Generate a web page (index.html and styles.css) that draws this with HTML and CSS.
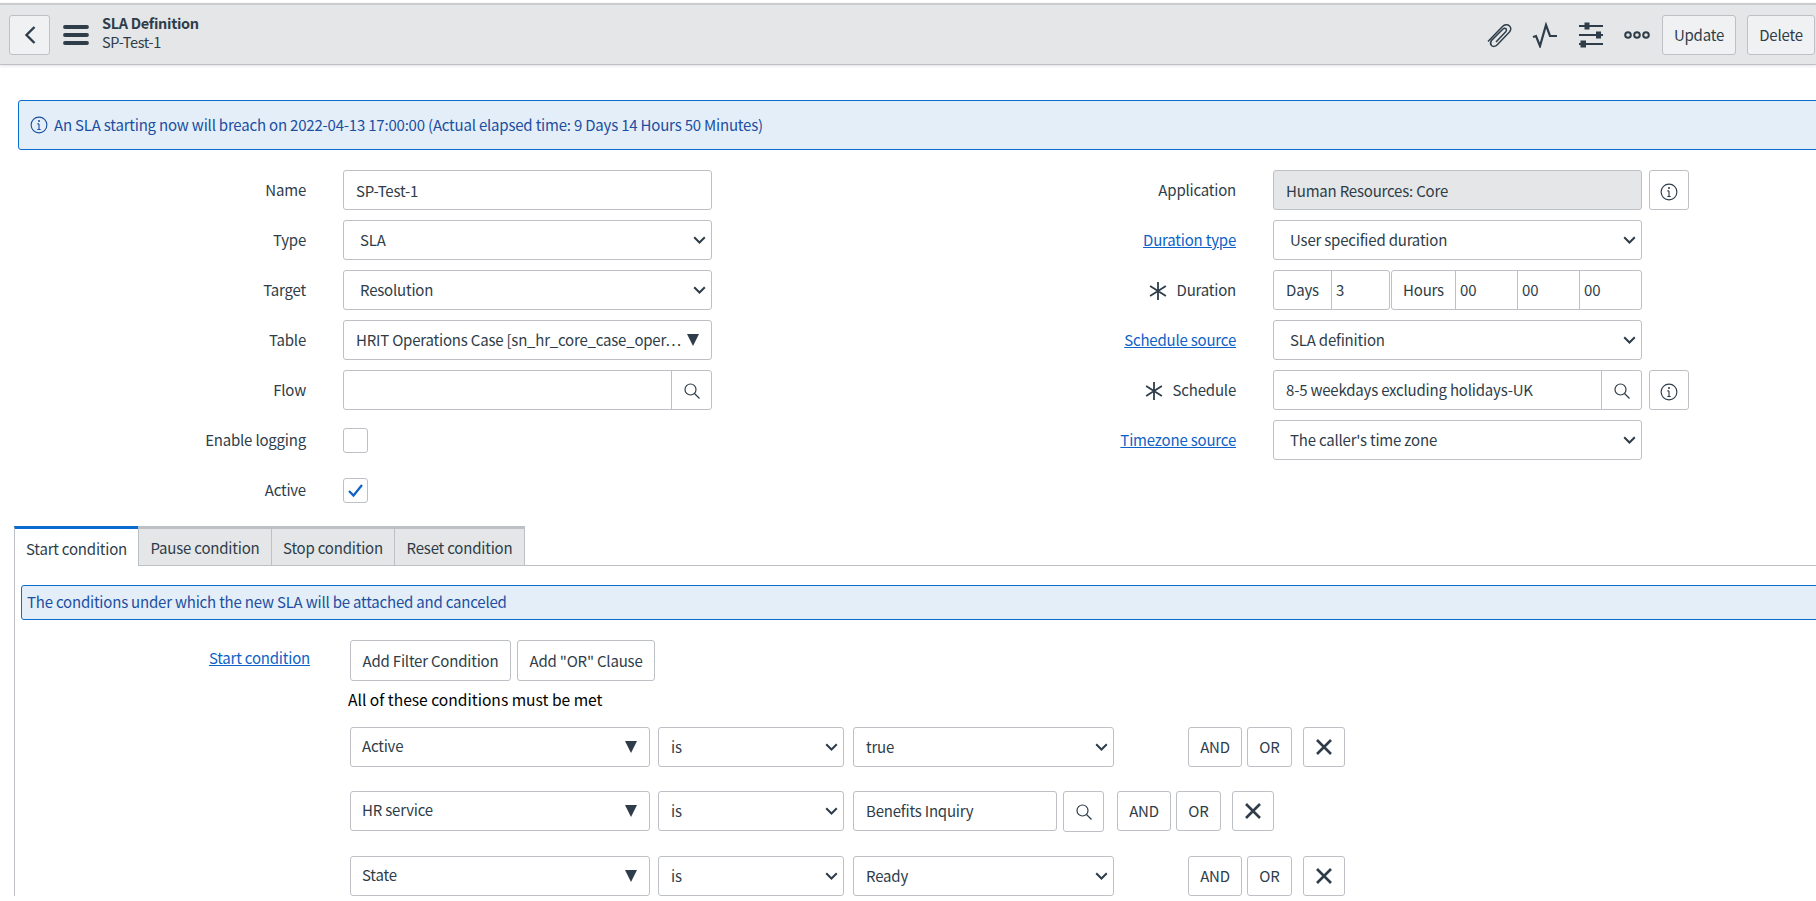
FILE: index.html
```html
<!DOCTYPE html>
<html lang="en">
<head>
  <meta charset="UTF-8">
  <title>SLA Definition - SP-Test-1</title>
  <link rel="stylesheet" href="styles.css">
</head>
<body>
  <header class="topbar">
    <button class="btn back-btn" aria-label="Back">
      <svg width="14" height="20" viewBox="0 0 14 20"><path d="M11.500 2 3.500 10l8 8" fill="none" stroke="#2e3d49" stroke-width="2.400"/></svg>
    </button>
    <svg class="menu-icon" width="26" height="22" viewBox="0 0 26 22"><path d="M2 3h22M2 11h22M2 19h22" stroke="#2e3d49" stroke-width="3.800" stroke-linecap="round"/></svg>
    <div class="title-block">
      <div class="title">SLA Definition</div>
      <div class="subtitle">SP-Test-1</div>
    </div>
    <div class="topbar-actions">
      <svg class="action-icon" width="26" height="26" viewBox="0 0 26 26"><path d="M2 19.500 16.500 4.500c2-2 5-2.500 7-.5s1.500 4.500-.5 6.500L11 23c-1.500 1.500-4 2-5.500.5s-1-3.500 0-5L17 7c1-1 2.500-1 3.200 0s.3 2-.7 3L10 20" fill="none" stroke="#2e3d49" stroke-width="1.500"/></svg>
      <svg class="action-icon" width="26" height="26" viewBox="0 0 26 26"><path d="M1 15l3-1 4 10 6-21 4 11h7" fill="none" stroke="#2e3d49" stroke-width="2.200"/></svg>
      <svg class="action-icon" width="26" height="26" viewBox="0 0 26 26"><path d="M1 4h24M1 13h24M1 22h24" stroke="#2e3d49" stroke-width="2"/><rect x="6.500" y="0.500" width="5" height="7" fill="#2e3d49"/><rect x="18" y="9.500" width="5" height="7" fill="#2e3d49"/><rect x="2.500" y="18.500" width="5.500" height="7" fill="#2e3d49"/></svg>
      <svg class="action-icon" width="26" height="26" viewBox="0 0 26 26"><g fill="none" stroke="#2e3d49" stroke-width="2"><circle cx="4" cy="13" r="2.800"/><circle cx="13" cy="13" r="2.800"/><circle cx="22" cy="13" r="2.800"/></g></svg>
      <button class="btn update-btn">Update</button>
      <button class="btn delete-btn">Delete</button>
    </div>
  </header>

  <div class="alert">
    <svg width="18" height="18" viewBox="0 0 16 16"><circle cx="8" cy="8" r="7" fill="none" stroke="#1c4fa1" stroke-width="1"/><path d="M8 7v5M6.500 12h3M6.500 7H8" stroke="#1c4fa1" stroke-width="1" fill="none"/><circle cx="8" cy="4.500" r=".9" fill="#1c4fa1"/></svg>
    <span>An SLA starting now will breach on 2022-04-13 17:00:00 (Actual elapsed time: 9 Days 14 Hours 50 Minutes)</span>
  </div>

  <form class="sla-form">
    <div class="form-col left-col">
      <div class="row">
        <label class="label">Name</label>
        <input class="control" type="text" value="SP-Test-1">
      </div>
      <div class="row">
        <label class="label">Type</label>
        <select class="control"><option>SLA</option></select>
      </div>
      <div class="row">
        <label class="label">Target</label>
        <select class="control"><option>Resolution</option></select>
      </div>
      <div class="row">
        <label class="label">Table</label>
        <div class="control fake-select">
          <span class="fake-text">HRIT Operations Case [sn_hr_core_case_oper…</span>
          <span class="triangle"></span>
        </div>
      </div>
      <div class="row">
        <label class="label">Flow</label>
        <div class="control lookup">
          <input type="text">
          <span class="lookup-btn">
            <svg width="18" height="18" viewBox="0 0 18 18"><circle cx="7.500" cy="7.500" r="5.500" fill="none" stroke="#2e3d49" stroke-width="1.200"/><path d="m11.500 11.500 5 5" stroke="#2e3d49" stroke-width="1.200"/></svg>
          </span>
        </div>
      </div>
      <div class="row">
        <label class="label">Enable logging</label>
        <span class="checkbox"></span>
      </div>
      <div class="row">
        <label class="label">Active</label>
        <span class="checkbox">
          <svg width="17" height="15" viewBox="0 0 17 15"><path d="m2 8 4.500 4.500L15 2" fill="none" stroke="#0d62c7" stroke-width="2.200"/></svg>
        </span>
      </div>
    </div>

    <div class="form-col right-col">
      <div class="row">
        <label class="label">Application</label>
        <input class="control readonly" type="text" value="Human Resources: Core" readonly>
        <span class="info-btn">
          <svg width="18" height="18" viewBox="0 0 16 16"><circle cx="8" cy="8" r="7" fill="none" stroke="#2e3d49" stroke-width="1"/><path d="M8 7v5M6.500 12h3M6.500 7H8" stroke="#2e3d49" stroke-width="1" fill="none"/><circle cx="8" cy="4.500" r=".9" fill="#2e3d49"/></svg>
        </span>
      </div>
      <div class="row">
        <a class="label link">Duration type</a>
        <select class="control"><option>User specified duration</option></select>
      </div>
      <div class="row">
        <label class="label"><svg class="req" width="18" height="18" viewBox="0 0 16 16"><path d="M8 0v16M1 3.500l14 9M15 3.500l-14 9" stroke="#2e3d49" stroke-width="1.600"/></svg>Duration</label>
        <div class="control duration">
          <div class="segment days-seg">
            <span class="seg-label days-label">Days</span>
            <span class="seg-value">3</span>
          </div>
          <div class="segment hours-seg">
            <span class="seg-label hours-label">Hours</span>
            <span class="seg-value">00</span>
            <span class="seg-value">00</span>
            <span class="seg-value">00</span>
          </div>
        </div>
      </div>
      <div class="row">
        <a class="label link">Schedule source</a>
        <select class="control"><option>SLA definition</option></select>
      </div>
      <div class="row">
        <label class="label"><svg class="req" width="18" height="18" viewBox="0 0 16 16"><path d="M8 0v16M1 3.500l14 9M15 3.500l-14 9" stroke="#2e3d49" stroke-width="1.600"/></svg>Schedule</label>
        <div class="control lookup">
          <input type="text" value="8-5 weekdays excluding holidays-UK">
          <span class="lookup-btn">
            <svg width="18" height="18" viewBox="0 0 18 18"><circle cx="7.500" cy="7.500" r="5.500" fill="none" stroke="#2e3d49" stroke-width="1.200"/><path d="m11.500 11.500 5 5" stroke="#2e3d49" stroke-width="1.200"/></svg>
          </span>
        </div>
        <span class="info-btn">
          <svg width="18" height="18" viewBox="0 0 16 16"><circle cx="8" cy="8" r="7" fill="none" stroke="#2e3d49" stroke-width="1"/><path d="M8 7v5M6.500 12h3M6.500 7H8" stroke="#2e3d49" stroke-width="1" fill="none"/><circle cx="8" cy="4.500" r=".9" fill="#2e3d49"/></svg>
        </span>
      </div>
      <div class="row">
        <a class="label link">Timezone source</a>
        <select class="control"><option>The caller's time zone</option></select>
      </div>
    </div>
  </form>

  <section class="tabset">
    <div class="tabs">
      <div class="tab active">Start condition</div>
      <div class="tab pause-tab">Pause condition</div>
      <div class="tab stop-tab">Stop condition</div>
      <div class="tab reset-tab">Reset condition</div>
    </div>
    <div class="tab-panel">
      <div class="annotation">The conditions under which the new SLA will be attached and canceled</div>

      <div class="filter-head">
        <a class="filter-label link">Start condition</a>
        <button class="btn filter-btn add-filter">Add Filter Condition</button>
        <button class="btn filter-btn add-or">Add "OR" Clause</button>
      </div>
      <div class="filter-note">All of these conditions must be met</div>

      <div class="cond-row">
        <div class="cond-field"><span class="field-name">Active</span><span class="triangle"></span></div>
        <select class="cond-op"><option>is</option></select>
        <select class="cond-value"><option>true</option></select>
        <button class="btn and-btn wide-gap">AND</button>
        <button class="btn or-btn">OR</button>
        <button class="btn x-btn" aria-label="Remove">
          <svg width="18" height="18" viewBox="0 0 18 18"><path d="m2 2 14 14M16 2 2 16" stroke="#2e3d49" stroke-width="2.600"/></svg>
        </button>
      </div>
      <div class="cond-row">
        <div class="cond-field"><span class="field-name">HR service</span><span class="triangle"></span></div>
        <select class="cond-op"><option>is</option></select>
        <input class="cond-input" type="text" value="Benefits Inquiry">
        <button class="btn search-btn" aria-label="Search">
          <svg width="18" height="18" viewBox="0 0 18 18"><circle cx="7.500" cy="7.500" r="5.500" fill="none" stroke="#2e3d49" stroke-width="1.200"/><path d="m11.500 11.500 5 5" stroke="#2e3d49" stroke-width="1.200"/></svg>
        </button>
        <button class="btn and-btn">AND</button>
        <button class="btn or-btn">OR</button>
        <button class="btn x-btn" aria-label="Remove">
          <svg width="18" height="18" viewBox="0 0 18 18"><path d="m2 2 14 14M16 2 2 16" stroke="#2e3d49" stroke-width="2.600"/></svg>
        </button>
      </div>
      <div class="cond-row">
        <div class="cond-field"><span class="field-name">State</span><span class="triangle"></span></div>
        <select class="cond-op"><option>is</option></select>
        <select class="cond-value"><option>Ready</option></select>
        <button class="btn and-btn wide-gap">AND</button>
        <button class="btn or-btn">OR</button>
        <button class="btn x-btn" aria-label="Remove">
          <svg width="18" height="18" viewBox="0 0 18 18"><path d="m2 2 14 14M16 2 2 16" stroke="#2e3d49" stroke-width="2.600"/></svg>
        </button>
      </div>
    </div>
  </section>
</body>
</html>
```

FILE: styles.css
```css
html, body {
  margin: 0;
  padding: 0;
  height: 100%;
  overflow: hidden;
}
body {
  font-family: "Noto Sans CJK SC", "Noto Sans", sans-serif;
  font-size: 15px;
  letter-spacing: -0.2px;
  line-height: 22px;
  color: #2e3d49;
  background: #fff;
}
button, input, select {
  font: inherit;
  letter-spacing: inherit;
  color: inherit;
  box-sizing: border-box;
}
select {
  appearance: none;
  background-image: url("data:image/svg+xml,%3Csvg xmlns='http://www.w3.org/2000/svg' width='13' height='8' viewBox='0 0 13 8'%3E%3Cpath d='m1.200 1.200 5.300 5.300 5.300-5.300' fill='none' stroke='%232e3d49' stroke-width='2'/%3E%3C/svg%3E");
  background-repeat: no-repeat;
  background-position: right 5px center;
}
.btn {
  background: #fff;
  border: 1px solid #bdc0c4;
  border-radius: 3px;
  padding: 0;
  display: flex;
  align-items: center;
  justify-content: center;
}

/* top bar */
.topbar {
  margin-top: 3px;
  height: 59px;
  border-top: 2px solid #c9cbce;
  border-bottom: 1px solid #bdc0c4;
  background: #e4e6e7;
  box-shadow: 0 1px 3px rgba(0, 0, 0, 0.12);
  display: flex;
  align-items: center;
}
.back-btn {
  width: 41px;
  height: 40px;
  margin-left: 9px;
  background: #f0f1f3;
}
.menu-icon {
  margin-left: 13px;
}
.title-block {
  margin-left: 13px;
  margin-top: -5px;
  line-height: 19px;
  letter-spacing: -0.3px;
}
.title {
  font-weight: 700;
  font-size: 14.5px;
}
.subtitle {
  font-size: 14.5px;
}
.topbar-actions {
  margin-left: auto;
  display: flex;
  align-items: center;
}
.action-icon {
  margin-right: 20px;
}
.action-icon:nth-child(4) {
  margin-right: 12px;
}
.update-btn, .delete-btn {
  height: 40px;
  background: #f0f1f3;
}
.update-btn {
  width: 74px;
  margin-right: 11px;
}
.delete-btn {
  width: 68px;
  margin-right: 1px;
}

/* info message */
.alert {
  margin: 35px -4px 20px 18px;
  height: 50px;
  box-sizing: border-box;
  padding-left: 11px;
  display: flex;
  align-items: center;
  gap: 6px;
  border: 1px solid #0a6ccf;
  border-radius: 3px;
  background: #e4eef8;
  color: #1c4fa1;
}

/* form */
.sla-form {
  display: flex;
}
.left-col {
  width: 908px;
}
.form-col {
  display: flex;
  flex-direction: column;
  gap: 10px;
}
.row {
  display: flex;
  align-items: center;
  height: 40px;
}
.label {
  box-sizing: border-box;
  margin-right: 37px;
  text-align: right;
  flex: none;
}
.left-col .label {
  width: 306px;
}
.right-col .label {
  width: 328px;
}
.link {
  color: #0d62c7;
  text-decoration: underline;
}
.req {
  margin-right: 10px;
  vertical-align: -4px;
}
.control {
  width: 369px;
  height: 40px;
  box-sizing: border-box;
  border: 1px solid #bdc0c4;
  border-radius: 3px;
  background-color: #fff;
  flex: none;
}
input.control {
  padding: 0 12px;
}
select.control {
  padding-left: 16px;
}
.readonly {
  background-color: #e4e6e7;
}
.fake-select {
  display: flex;
  align-items: center;
  padding: 0 12px;
  gap: 4px;
}
.fake-text {
  flex: 1;
  min-width: 0;
  white-space: nowrap;
}
.triangle {
  flex: none;
  width: 0;
  height: 0;
  border-left: 6.500px solid transparent;
  border-right: 6.500px solid transparent;
  border-top: 12px solid #2e3d49;
}
.lookup {
  display: flex;
}
.lookup input {
  flex: 1;
  min-width: 0;
  border: 0;
  background: transparent;
  padding: 0 12px;
}
.lookup-btn {
  width: 39px;
  flex: none;
  border-left: 1px solid #bdc0c4;
  display: flex;
  align-items: center;
  justify-content: center;
}
.lookup-btn svg {
  margin-top: 2px;
}
.info-btn {
  width: 40px;
  height: 40px;
  margin-left: 7px;
  box-sizing: border-box;
  border: 1px solid #bdc0c4;
  border-radius: 3px;
  display: flex;
  align-items: center;
  justify-content: center;
}
.info-btn svg {
  margin-top: 3px;
}
.checkbox {
  width: 25px;
  height: 25px;
  box-sizing: border-box;
  border: 1px solid #bdc0c4;
  border-radius: 3px;
  display: flex;
  align-items: center;
  justify-content: center;
}

/* duration field */
.duration {
  display: flex;
  border: 0;
}
.segment {
  display: flex;
  height: 40px;
  box-sizing: border-box;
  border: 1px solid #bdc0c4;
  border-radius: 3px;
}
.days-seg {
  width: 117px;
}
.hours-seg {
  width: 251px;
  margin-left: 1px;
}
.seg-label {
  flex: none;
  display: flex;
  align-items: center;
  justify-content: center;
  border-right: 1px solid #bdc0c4;
}
.days-label {
  width: 57px;
}
.hours-label {
  width: 63px;
}
.seg-value {
  flex: 1;
  display: flex;
  align-items: center;
  padding-left: 4px;
  border-right: 1px solid #bdc0c4;
}
.seg-value:last-child {
  border-right: 0;
}

/* tabs */
.tabset {
  margin: 16px 0 0 14px;
}
.tabs {
  display: flex;
  height: 40px;
  box-sizing: border-box;
  border-bottom: 1px solid #bdc0c4;
}
.tab {
  box-sizing: border-box;
  height: 39px;
  padding-top: 2px;
  border-top: 3px solid #bdc0c4;
  border-right: 1px solid #bdc0c4;
  background: #e4e6e7;
  display: flex;
  align-items: center;
  justify-content: center;
}
.tab.active {
  width: 124px;
  height: 40px;
  background: #fff;
  border-top-color: #0a6ccf;
  border-right: 0;
  border-left: 1px solid #bdc0c4;
}
.pause-tab {
  width: 134px;
  border-left: 1px solid #bdc0c4;
}
.stop-tab {
  width: 123px;
}
.reset-tab {
  width: 130px;
}
.tab-panel {
  border-left: 1px solid #bdc0c4;
  padding-top: 19px;
}
.annotation {
  margin: 0 -4px 20px 6px;
  height: 35px;
  box-sizing: border-box;
  padding: 0 0 2px 5px;
  display: flex;
  align-items: center;
  border: 1px solid #0a6ccf;
  border-radius: 3px;
  background: #e4eef8;
  color: #1c4fa1;
}

/* condition builder */
.filter-head {
  display: flex;
  height: 41px;
  gap: 6px;
}
.filter-label {
  width: 295px;
  margin-right: 34px;
  text-align: right;
  margin-top: 7px;
}
.filter-btn {
  height: 41px;
}
.add-filter {
  width: 161px;
}
.add-or {
  width: 138px;
}
.filter-note {
  margin: 7px 0 17px 333px;
  color: #000;
  font-size: 15.600px;
  letter-spacing: 0;
}
.cond-row {
  display: flex;
  margin: 0 0 24px 335px;
  align-items: flex-start;
}
.cond-field {
  width: 300px;
  height: 40px;
  box-sizing: border-box;
  border: 1px solid #bdc0c4;
  border-radius: 3px;
  padding: 0 12px 0 11px;
  display: flex;
  align-items: center;
  justify-content: space-between;
}
.field-name {
  margin-top: -2px;
}
.cond-op, .cond-value, .cond-input {
  height: 40px;
  border: 1px solid #bdc0c4;
  border-radius: 3px;
  background-color: #fff;
}
.cond-op {
  width: 186px;
  margin-left: 8px;
  padding-left: 12px;
}
.cond-value {
  width: 261px;
  margin-left: 9px;
  padding-left: 12px;
}
.cond-input {
  width: 204px;
  margin-left: 9px;
  padding: 0 12px 2px;
}
.search-btn {
  width: 41px;
  height: 41px;
  margin-left: 6px;
}
.and-btn {
  width: 54px;
  height: 40px;
  margin-left: 13px;
}
.and-btn.wide-gap {
  margin-left: 74px;
}
.or-btn {
  width: 45px;
  height: 40px;
  margin-left: 5px;
}
.x-btn {
  width: 42px;
  height: 40px;
  margin-left: 11px;
}
```
